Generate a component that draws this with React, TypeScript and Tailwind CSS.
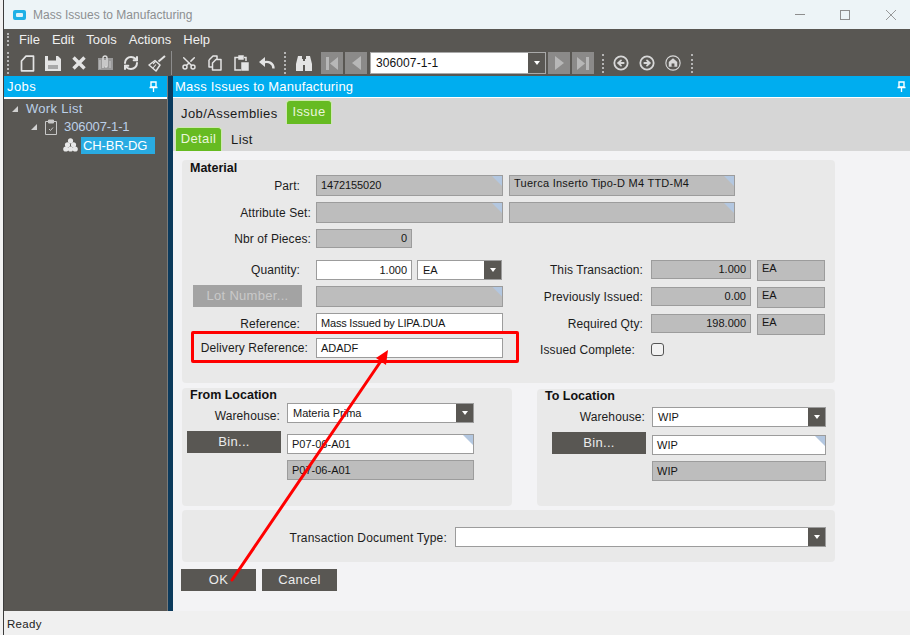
import { ReactNode } from "react";
import { CircleArrowLeft, CircleArrowRight, RefreshCw, Scissors } from "lucide-react";

const ICON = "#e4e4e4";

function Grip({ className = "h-[22px]" }: { className?: string }) {
  return <div className={`w-[2px] border-l-2 border-dotted border-[#b5b5b5] ${className}`} />;
}

function Pin() {
  return (
    <svg width="9" height="11" viewBox="0 0 9 11" className="shrink-0">
      <path d="M2 1h5v5H2z" fill="none" stroke="#fff" strokeWidth="1.4" />
      <path d="M0.5 6.5h8M4.5 6.5V11" stroke="#fff" strokeWidth="1.3" />
    </svg>
  );
}

function Slot({ children }: { children: ReactNode }) {
  return <div className="w-[26px] h-[26px] flex items-center justify-center shrink-0">{children}</div>;
}

function NavButton({ children }: { children: ReactNode }) {
  return <div className="w-[22px] h-[22px] bg-[#8b8a89] flex items-center justify-center shrink-0">{children}</div>;
}

function DropArrow() {
  return <div className="w-0 h-0 border-l-[3.5px] border-r-[3.5px] border-t-[4px] border-l-transparent border-r-transparent border-t-white" />;
}

function Fold() {
  return <span className="absolute top-0 right-0 w-[10px] h-[10px] bg-[#b3c7e0] [clip-path:polygon(0_0,100%_0,100%_100%)]" />;
}

function Field({
  w,
  h = "h-[21px]",
  gray = false,
  fold = false,
  right = false,
  top = false,
  children,
}: {
  w: string;
  h?: string;
  gray?: boolean;
  fold?: boolean;
  right?: boolean;
  top?: boolean;
  children?: ReactNode;
}) {
  return (
    <div
      className={`relative ${w} ${h} shrink-0 border border-[#9c9c9c] flex px-[4px] text-[11px] leading-[13px] text-[#151515] ${
        top ? "items-start pt-[1px]" : "items-center"
      } ${right ? "justify-end" : ""} ${gray ? "bg-[#bdbdbd]" : "bg-white"}`}
    >
      {children}
      {fold && <Fold />}
    </div>
  );
}

function Combo({ w, children }: { w: string; children?: ReactNode }) {
  return (
    <div className={`${w} h-[20px] shrink-0 border border-[#9c9c9c] bg-white flex items-center text-[11px] leading-[13px] text-[#151515]`}>
      <span className="flex-1 pl-[5px]">{children}</span>
      <div className="w-[17px] h-full bg-[#595753] flex items-center justify-center">
        <DropArrow />
      </div>
    </div>
  );
}

function Label({ w, pr, children }: { w: string; pr: string; children: ReactNode }) {
  return <div className={`${w} ${pr} shrink-0 text-right text-[12px] text-[#1c1c1c] tracking-[0.1px] whitespace-nowrap`}>{children}</div>;
}

function DarkButton({ w, ml = "", children }: { w: string; ml?: string; children: ReactNode }) {
  return (
    <div className={`${w} ${ml} h-[22px] bg-[#595753] text-[#ececec] text-[13px] tracking-[0.3px] flex items-center justify-center shrink-0`}>
      {children}
    </div>
  );
}

function GroupTitle({ h, children }: { h: string; children: ReactNode }) {
  return <div className={`${h} pl-[8px] text-[12.5px] font-bold text-[#111] leading-[15px] whitespace-nowrap`}>{children}</div>;
}

function Toolbar() {
  return (
    <div className="h-[26px] bg-[#595753] flex items-center">
      <Grip className="ml-[3px] h-[22px] mr-[5px]" />
      <Slot>
        <svg width="15" height="17" viewBox="0 0 15 17" fill="none" stroke={ICON} strokeWidth="1.7" strokeLinejoin="round">
          <path d="M1.5 6 L6 1.2 H13.5 V15.8 H1.5 Z" />
        </svg>
      </Slot>
      <Slot>
        <svg width="16" height="15" viewBox="0 0 16 15">
          <path d="M0 0H13L16 3V15H0Z" fill={ICON} />
          <path d="M3 0H11V4.5H3Z" fill="#595753" />
          <path d="M3 9H13V13H3Z" fill="#a8a8a8" />
        </svg>
      </Slot>
      <Slot>
        <svg width="14" height="14" viewBox="0 0 14 14" stroke={ICON} strokeWidth="3.4">
          <path d="M1.5 1.5L12.5 12.5M12.5 1.5L1.5 12.5" />
        </svg>
      </Slot>
      <Slot>
        <svg width="15" height="16" viewBox="0 0 15 16">
          <path d="M0 3H15V15H0Z" fill="#9a9a9a" />
          <path d="M5 13V3a2 2 0 0 1 4 0V11a1 1 0 0 1-2 0V5" fill="none" stroke="#dcdcdc" strokeWidth="1.4" />
          <path d="M2 5V14M12 6V13" stroke="#c4c4c4" strokeWidth="1.2" />
        </svg>
      </Slot>
      <Slot>
        <RefreshCw size={16} color={ICON} strokeWidth={3} />
      </Slot>
      <Slot>
        <svg width="18" height="17" viewBox="0 0 18 17" fill="none" stroke={ICON} strokeWidth="1.5" strokeLinejoin="round">
          <path d="M17 1L10.5 6.5" strokeWidth="2" />
          <path d="M7 5.5L12 10L8 16L1 10Z" />
          <path d="M5 13L8 9.5M7.5 6.5L5 9" strokeWidth="1.1" />
        </svg>
      </Slot>
      <div className="w-px h-[24px] ml-[1px] mr-[4px] bg-[#8d8d8d]" />
      <Slot>
        <Scissors size={16} color={ICON} strokeWidth={2.2} className="-rotate-90" />
      </Slot>
      <Slot>
        <svg width="14" height="16" viewBox="0 0 14 16" fill="none" stroke={ICON} strokeWidth="1.5" strokeLinejoin="round">
          <path d="M1 5L5 1H9V4M1 5V12H4" />
          <path d="M4.5 8L8 4.5H13V15H4.5Z" />
        </svg>
      </Slot>
      <Slot>
        <svg width="15" height="16" viewBox="0 0 15 16" fill="none" stroke={ICON} strokeWidth="1.5">
          <path d="M5 2.5H1V15H7M10 2.5H12V6" />
          <path d="M5 1H9V4H5Z" fill={ICON} />
          <path d="M8 8H14V15H8Z" fill={ICON} />
        </svg>
      </Slot>
      <Slot>
        <svg width="16" height="12" viewBox="0 0 16 12" fill="none">
          <path d="M14.5 11.5C14.5 6.5 10 3.5 4 5.5" stroke={ICON} strokeWidth="2.4" />
          <path d="M0 5L6 0V10Z" fill={ICON} />
        </svg>
      </Slot>
      <Grip className="ml-[4px] h-[22px] mr-[5px]" />
      <Slot>
        <svg width="16" height="15" viewBox="0 0 16 15" fill={ICON}>
          <path d="M2 0H6V3H7V15H0V8Z" />
          <path d="M14 0H10V3H9V15H16V8Z" />
          <path d="M7 5H9V9H7Z" />
        </svg>
      </Slot>
      <div className="w-[4px] shrink-0" />
      <NavButton>
        <svg width="12" height="13" viewBox="0 0 12 13" fill="#b7b7b7">
          <path d="M0 0H3V13H0ZM12 0V13L4 6.5Z" />
        </svg>
      </NavButton>
      <div className="w-[2px] shrink-0" />
      <NavButton>
        <svg width="9" height="14" viewBox="0 0 9 14" fill="#b7b7b7">
          <path d="M9 0V14L0 7Z" />
        </svg>
      </NavButton>
      <div className="w-[3px] shrink-0" />
      <div className="relative w-[176px] h-[22px] border border-[#a9a9a9] bg-white flex items-center shrink-0 text-[12px] tracking-[0.1px] text-[#111]">
        <span className="flex-1 pl-[5px]">306007-1-1</span>
        <div className="w-[17px] h-full bg-[#595753] flex items-center justify-center">
          <DropArrow />
        </div>
      </div>
      <div className="w-[2px] shrink-0" />
      <NavButton>
        <svg width="9" height="14" viewBox="0 0 9 14" fill="#b7b7b7">
          <path d="M0 0V14L9 7Z" />
        </svg>
      </NavButton>
      <div className="w-[2px] shrink-0" />
      <NavButton>
        <svg width="12" height="13" viewBox="0 0 12 13" fill="#b7b7b7">
          <path d="M9 0H12V13H9ZM0 0V13L8 6.5Z" />
        </svg>
      </NavButton>
      <Grip className="ml-[8px] h-[19px] mr-[9px]" />
      <div className="flex items-center gap-[10px]">
        <CircleArrowLeft size={16} color="#d8d8d8" strokeWidth={1.8} absoluteStrokeWidth />
        <CircleArrowRight size={16} color="#d8d8d8" strokeWidth={1.8} absoluteStrokeWidth />
        <svg width="16" height="16" viewBox="0 0 17 17">
          <circle cx="8.5" cy="8.5" r="7.6" fill="none" stroke="#d8d8d8" strokeWidth="1.2" />
          <path d="M8.5 3.5L13 7.5V12.5H4V7.5Z" fill="#d8d8d8" />
          <path d="M7 9H10V12.5H7Z" fill="#595753" />
        </svg>
      </div>
      <Grip className="ml-[10px] h-[19px]" />
    </div>
  );
}

function JobsPanel() {
  return (
    <div className="w-[164px] shrink-0 flex flex-col bg-[#595753] border-r border-r-[#7a7a7a]">
      <div className="h-[21px] bg-[#00adef] flex items-center justify-between pl-[3px] pr-[9px] text-white text-[13px] tracking-[0.4px]">
        <span>Jobs</span>
        <Pin />
      </div>
      <div className="flex-1 text-[13px] tracking-[-0.1px] text-[#bcd0e8] border-t-2 border-t-[#ffffff]">
        <div className="h-[18px] flex items-center pl-[8px] mt-px">
          <span className="w-0 h-0 border-b-[6px] border-l-[6px] border-b-[#d0d0d0] border-l-transparent mr-[8px]" />
          <span className="tracking-[0.3px]">Work List</span>
        </div>
        <div className="h-[18px] flex items-center pl-[27px]">
          <span className="w-0 h-0 border-b-[6px] border-l-[6px] border-b-[#d0d0d0] border-l-transparent mr-[8px]" />
          <svg width="12" height="16" viewBox="0 0 12 16" fill="none" stroke="#c8c8c8" strokeWidth="1" className="mr-[7px]">
            <path d="M3 2.5H0.5V15.5H11.5V2.5H9" />
            <path d="M3.5 1H8.5V4H3.5Z" fill="#c8c8c8" />
            <path d="M4 10L5.5 11.5L8 8.5" />
          </svg>
          <span>306007-1-1</span>
        </div>
        <div className="h-[18px] flex items-center pl-[59px]">
          <svg width="15" height="14" viewBox="0 0 15 14" fill="#e8e8e8" className="mr-[3px]">
            <circle cx="7.5" cy="2.8" r="2.6" />
            <circle cx="4.5" cy="6.8" r="2.6" />
            <circle cx="10.5" cy="6.8" r="2.6" />
            <circle cx="2.8" cy="11" r="2.6" />
            <circle cx="7.5" cy="11" r="2.6" />
            <circle cx="12.2" cy="11" r="2.6" />
          </svg>
          <span className="w-[74px] h-[17px] bg-[#29abe2] text-white pl-[2px] leading-[17px] whitespace-nowrap">CH-BR-DG</span>
        </div>
      </div>
    </div>
  );
}

function MaterialGroup() {
  return (
    <div className="ml-px w-[653px] h-[223px] bg-[#e9e9e9] rounded-[4px] pt-[1px] shrink-0">
      <GroupTitle h="h-[14px]">Material</GroupTitle>
      <div className="flex items-center">
        <Label w="w-[134px]" pr="pr-[16px]">Part:</Label>
        <Field w="w-[187px]" gray fold>
          <span className="tracking-[-0.1px]">1472155020</span>
        </Field>
        <div className="w-[6px]" />
        <Field w="w-[226px]" gray fold top>
          <span className="tracking-[0.25px]">Tuerca Inserto Tipo-D M4 TTD-M4</span>
        </Field>
      </div>
      <div className="flex items-center mt-[6px]">
        <Label w="w-[134px]" pr="pr-[5px]">Attribute Set:</Label>
        <Field w="w-[187px]" gray fold />
        <div className="w-[6px]" />
        <Field w="w-[226px]" gray fold />
      </div>
      <div className="flex items-center mt-[6px]">
        <Label w="w-[134px]" pr="pr-[5px]">Nbr of Pieces:</Label>
        <Field w="w-[96px]" h="h-[19px]" gray right>0</Field>
      </div>
      <div className="flex mt-[12px]">
        <div className="w-[348px] shrink-0">
          <div className="flex items-center">
            <Label w="w-[134px]" pr="pr-[16px]">Quantity:</Label>
            <Field w="w-[96px]" h="h-[20px]" right>1.000</Field>
            <div className="w-[5px]" />
            <Combo w="w-[85px]">EA</Combo>
          </div>
          <div className="flex items-center mt-[5px]">
            <div className="ml-[11px] w-[109px] h-[22px] bg-[#a3a3a3] text-[#c9c9c9] text-[13px] tracking-[0.3px] flex items-center justify-center shrink-0">
              Lot Number...
            </div>
            <div className="w-[14px]" />
            <Field w="w-[187px]" gray fold />
          </div>
          <div className="flex items-center mt-[6px]">
            <Label w="w-[134px]" pr="pr-[16px]">Reference:</Label>
            <Field w="w-[187px]">
              <span className="tracking-[-0.2px]">Mass Issued by LIPA.DUA</span>
            </Field>
          </div>
          <div className="flex items-center mt-[4px]">
            <Label w="w-[134px]" pr="pr-[8px]">Delivery Reference:</Label>
            <Field w="w-[187px]" h="h-[20px]">ADADF</Field>
          </div>
        </div>
        <div>
          <div className="flex items-start">
            <div className="h-[19px] flex items-center">
              <Label w="w-[113px]" pr="pr-0">This Transaction:</Label>
            </div>
            <div className="w-[8px]" />
            <Field w="w-[100px]" h="h-[19px]" gray right>1.000</Field>
            <div className="w-[6px]" />
            <Field w="w-[68px]" gray top>EA</Field>
          </div>
          <div className="flex items-start mt-[6px]">
            <div className="h-[19px] flex items-center">
              <Label w="w-[113px]" pr="pr-0">Previously Issued:</Label>
            </div>
            <div className="w-[8px]" />
            <Field w="w-[100px]" h="h-[19px]" gray right>0.00</Field>
            <div className="w-[6px]" />
            <Field w="w-[68px]" gray top>EA</Field>
          </div>
          <div className="flex items-start mt-[6px]">
            <div className="h-[19px] flex items-center">
              <Label w="w-[113px]" pr="pr-0">Required Qty:</Label>
            </div>
            <div className="w-[8px]" />
            <Field w="w-[100px]" h="h-[19px]" gray right>198.000</Field>
            <div className="w-[6px]" />
            <Field w="w-[68px]" gray top>EA</Field>
          </div>
          <div className="flex items-center mt-[8px] h-[13px]">
            <Label w="w-[113px]" pr="pr-[8px]">Issued Complete:</Label>
            <div className="w-[8px]" />
            <div className="w-[13px] h-[13px] rounded-[3px] border border-[#555] bg-[#f2f2f2]" />
          </div>
        </div>
      </div>
    </div>
  );
}

function FromLocation() {
  return (
    <div className="w-[330px] h-[118px] bg-[#e9e9e9] rounded-[4px] shrink-0">
      <GroupTitle h="h-[15px]">From Location</GroupTitle>
      <div className="flex items-start">
        <Label w="w-[105px] h-[20px] pt-[4px]" pr="pr-[7px]">Warehouse:</Label>
        <Combo w="w-[187px]">Materia Prima</Combo>
      </div>
      <div className="flex items-start mt-[8px]">
        <DarkButton w="w-[94px]" ml="ml-[5px]">Bin...</DarkButton>
        <div className="w-[6px]" />
        <div className="mt-[3px]">
          <Field w="w-[187px]" h="h-[20px]" fold>P07-06-A01</Field>
          <div className="h-[6px]" />
          <Field w="w-[187px]" h="h-[20px]" gray>P07-06-A01</Field>
        </div>
      </div>
    </div>
  );
}

function ToLocation() {
  return (
    <div className="mt-px w-[298px] h-[117px] bg-[#e9e9e9] rounded-[4px] shrink-0">
      <GroupTitle h="h-[18px]">To Location</GroupTitle>
      <div className="flex items-start">
        <Label w="w-[115px] h-[20px] pt-[1px]" pr="pr-[7px]">Warehouse:</Label>
        <Combo w="w-[174px]">WIP</Combo>
      </div>
      <div className="flex items-start mt-[5px]">
        <DarkButton w="w-[94px]" ml="ml-[15px]">Bin...</DarkButton>
        <div className="w-[6px]" />
        <div className="mt-[3px]">
          <Field w="w-[174px]" h="h-[20px]" fold>WIP</Field>
          <div className="h-[6px]" />
          <Field w="w-[174px]" h="h-[20px]" gray>WIP</Field>
        </div>
      </div>
    </div>
  );
}

export default function App() {
  return (
    <div className="relative w-[910px] h-[635px] overflow-hidden flex bg-[#f0f0f0] font-['Liberation_Sans',Arial,sans-serif]">
      <div className="w-[4px] shrink-0 bg-[#f2f2f2] border-r border-r-[#3c3c3c]" />
      <div className="flex-1 min-w-0 flex flex-col">
        {/* title bar */}
        <div className="h-[29px] bg-[#edf4f7] flex items-center shrink-0">
          <div className="ml-[9px] w-[13px] h-[10px] rounded-[2px] bg-[#1fb0e6] flex items-center justify-center">
            <div className="w-[7px] h-[4px] rounded-[1px] bg-[#dff4fb]" />
          </div>
          <span className="ml-[7px] text-[12px] text-[#8c8f91]">Mass Issues to Manufacturing</span>
          <div className="flex-1" />
          <div className="w-[10px] h-px bg-[#8e8e8e]" />
          <div className="ml-[35px] w-[10px] h-[10px] border border-[#8e8e8e]" />
          <svg width="10" height="10" viewBox="0 0 10 10" stroke="#8e8e8e" strokeWidth="0.9" className="ml-[36px] mr-[14px]">
            <path d="M0 0L10 10M10 0L0 10" />
          </svg>
        </div>
        {/* menu */}
        <div className="h-[21px] bg-[#595753] flex items-center shrink-0 text-[13px] text-[#f0f0f0]">
          <Grip className="ml-[3px] h-[13px] mr-[10px]" />
          <div className="flex gap-[12px]">
            <span>File</span>
            <span>Edit</span>
            <span>Tools</span>
            <span>Actions</span>
            <span>Help</span>
          </div>
        </div>
        <Toolbar />
        <div className="flex-1 min-h-0 flex">
          <JobsPanel />
          <div className="w-[5px] shrink-0 bg-[#0b3a5c]" />
          <div className="flex-1 min-w-0 flex flex-col bg-[#f3f3f5]">
            <div className="h-[21px] bg-[#00adef] flex items-center justify-between pl-[2px] pr-[4px] text-white text-[13px] tracking-[0.2px] shrink-0">
              <span>Mass Issues to Manufacturing</span>
              <Pin />
            </div>
            <div className="h-px bg-white shrink-0" />
            <div className="h-[26px] bg-[#d6d6d6] flex items-end shrink-0 text-[13px] tracking-[0.4px] text-[#1a1a1a]">
              <span className="ml-[8px] w-[105px] mb-[1px] whitespace-nowrap">Job/Assemblies</span>
              <div className="w-[46px] h-[24px] bg-[#66bb22] border border-b-0 border-[#cfeab0] rounded-t-[4px] text-[#eaf6dc] flex items-center justify-center pb-[2px]">
                Issue
              </div>
            </div>
            <div className="h-[27px] bg-[#d6d6d6] flex items-end shrink-0 text-[13px] tracking-[0.4px] text-[#1a1a1a]">
              <div className="ml-[2px] w-[47px] h-[24px] bg-[#66bb22] border border-b-0 border-[#cfeab0] rounded-t-[4px] text-[#eaf6dc] flex items-center justify-center pb-[2px]">
                Detail
              </div>
              <span className="ml-[9px] mb-[2px]">List</span>
            </div>
            <div className="pl-[8px] pt-[9px] flex flex-col">
              <MaterialGroup />
              <div className="ml-px mt-[5px] flex items-start gap-[25px]">
                <FromLocation />
                <ToLocation />
              </div>
              <div className="ml-px mt-[4px] w-[653px] h-[52px] bg-[#e9e9e9] rounded-[4px] pt-[17px] flex items-start shrink-0">
                <div className="h-[22px] flex items-center">
                  <Label w="w-[273px] tracking-[0.18px]" pr="pr-[8px]">Transaction Document Type:</Label>
                </div>
                <Combo w="w-[371px]" />
              </div>
              <div className="mt-[7px] flex gap-[6px]">
                <DarkButton w="w-[75px]">OK</DarkButton>
                <DarkButton w="w-[75px]">Cancel</DarkButton>
              </div>
            </div>
          </div>
        </div>
        {/* status bar */}
        <div className="h-[24px] bg-[#f0f0f0] flex items-center shrink-0 pl-[3px] pt-[3px] text-[11.5px] tracking-[0.3px] text-[#222]">Ready</div>
      </div>

      {/* annotation drawn over the form */}
      <div className="absolute left-[191px] top-[331px] w-[328px] h-[32px] border-[3px] border-[#ff0000] rounded-[2px]" />
      <svg className="absolute inset-0 pointer-events-none" width="910" height="635" viewBox="0 0 910 635">
        <path d="M232 580L383 358" stroke="#ff0000" strokeWidth="3" strokeLinecap="round" />
        <path d="M388 350L376 358L386 365Z" fill="#ff0000" />
      </svg>
    </div>
  );
}
